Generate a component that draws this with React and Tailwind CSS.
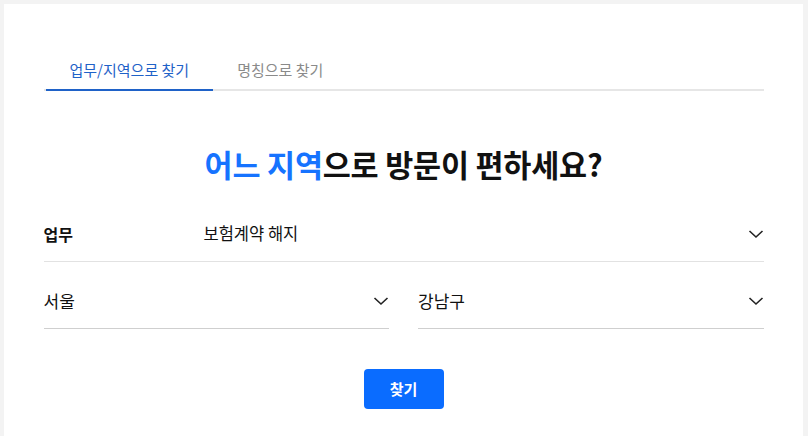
import React from 'react';

const Chevron = () => (
    <svg width="16" height="10" viewBox="0 0 16 10" fill="none" className="shrink-0">
        <polyline points="1.5,2 8,8 14.5,2" stroke="#222" strokeWidth="1.6" strokeLinejoin="miter" />
    </svg>
);

const App = () => {
    return (
        <div
            className="min-h-[436px] bg-[#f3f3f3] pt-1 pl-1 pr-[5px]"
            style={{ fontFamily: '"Noto Sans CJK KR", "Noto Sans", sans-serif' }}
        >
            <div className="bg-white min-h-[432px]">
                <div className="w-[720px] mx-auto pt-[56px]">
                    {/* Tabs */}
                    <div className="flex border-b-2 border-[#e6e6e6] pl-0.5">
                        <button className="px-6 pb-[9px] pt-0 text-[15px] leading-[20px] text-[#1f62c8] border-b-2 border-[#1f62c8] -mb-[2px]">
                            업무/지역으로 찾기
                        </button>
                        <button className="px-6 pb-[9px] pt-0 text-[15px] leading-[20px] text-[#8a8a8a]">
                            명칭으로 찾기
                        </button>
                    </div>

                    {/* Title */}
                    <h1 className="mt-[53px] text-center text-[30.5px] leading-[40px] font-bold text-[#111] tracking-[-0.2px]">
                        <span className="text-[#1673ff]">어느 지역</span>으로 방문이 편하세요?
                    </h1>

                    {/* Work row */}
                    <div className="mt-[22px] flex items-center h-[56px] border-b border-[#e2e2e2]">
                        <span className="w-[160px] text-[16px] font-bold text-[#111]">업무</span>
                        <span className="flex-1 text-[16.5px] text-[#111]">보험계약 해지</span>
                        <Chevron />
                    </div>

                    {/* Region row */}
                    <div className="mt-[11px] grid grid-cols-2 gap-[29px]">
                        <div className="flex items-center justify-between h-[56px] border-b border-[#cfcfcf]">
                            <span className="text-[17px] text-[#111]">서울</span>
                            <Chevron />
                        </div>
                        <div className="flex items-center justify-between h-[56px] border-b border-[#cfcfcf]">
                            <span className="text-[17px] text-[#111]">강남구</span>
                            <Chevron />
                        </div>
                    </div>

                    {/* Submit */}
                    <div className="mt-[40px] flex justify-center">
                        <button className="w-[80px] h-[40px] rounded-[4px] bg-[#0a6cff] text-white text-[15px] font-bold">
                            찾기
                        </button>
                    </div>
                </div>
            </div>
        </div>
    );
};

export default App;
